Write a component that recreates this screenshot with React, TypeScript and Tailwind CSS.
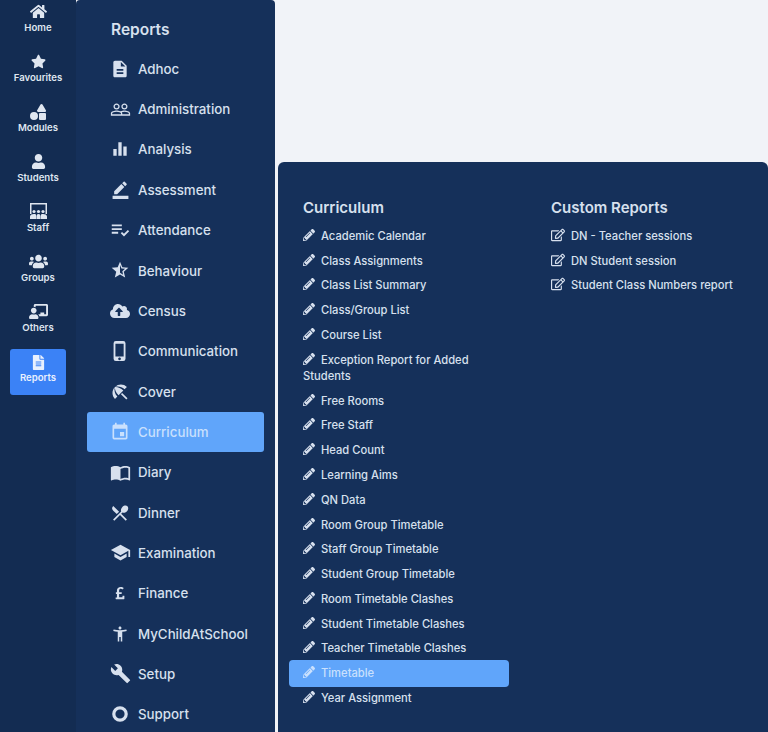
import React from "react";
import { FaHome, FaStar, FaShapes, FaUser, FaUsers, FaChalkboardTeacher, FaFileAlt, FaCloudUploadAlt, FaPoundSign, FaPencilAlt, FaRegEdit } from "react-icons/fa";
import { MdDescription, MdPeopleOutline, MdEqualizer, MdBorderColor, MdPlaylistAddCheck, MdStarHalf, MdPhoneIphone, MdEvent, MdImportContacts, MdLocalDining, MdSchool, MdAccessibilityNew, MdBuild, MdBeachAccess } from "react-icons/md";

function StaffIcon() {
  return (
    <svg width="19" height="17" viewBox="0 0 19 17" fill="currentColor">
      <path d="M1 0h17v11h-1.5V1.5h-14V11H1z" />
      <circle cx="5" cy="8.5" r="1.6" />
      <circle cx="9.5" cy="8.5" r="1.6" />
      <circle cx="14" cy="8.5" r="1.6" />
      <path d="M1 16v-2.5C1 11.8 3 11 5 11s2.2.6 2.2 2.5V16zM7.6 16v-2.5c0-1.7.6-2.5 1.9-2.5s1.9.8 1.9 2.5V16zM11.8 16v-2.5c0-1.9.2-2.5 2.2-2.5s4 .8 4 2.5V16z" />
    </svg>
  );
}

function RingIcon() {
  return (
    <svg width="16" height="16" viewBox="0 0 16 16" fill="none" stroke="currentColor" strokeWidth="3.2">
      <circle cx="8" cy="8" r="6.2" />
    </svg>
  );
}

const rail = [
  { label: "Home", icon: <FaHome size={17} /> },
  { label: "Favourites", icon: <FaStar size={15} /> },
  { label: "Modules", icon: <FaShapes size={16} /> },
  { label: "Students", icon: <FaUser size={15} /> },
  { label: "Staff", icon: <StaffIcon /> },
  { label: "Groups", icon: <FaUsers size={19} /> },
  { label: "Others", icon: <FaChalkboardTeacher size={19} /> },
];

const menu: { label: string; icon: React.ReactNode; active?: boolean }[] = [
  { label: "Adhoc", icon: <MdDescription size={20} /> },
  { label: "Administration", icon: <MdPeopleOutline size={21} /> },
  { label: "Analysis", icon: <MdEqualizer size={20} /> },
  { label: "Assessment", icon: <MdBorderColor size={19} /> },
  { label: "Attendance", icon: <MdPlaylistAddCheck size={22} /> },
  { label: "Behaviour", icon: <MdStarHalf size={20} /> },
  { label: "Census", icon: <FaCloudUploadAlt size={20} /> },
  { label: "Communication", icon: <MdPhoneIphone size={22} /> },
  { label: "Cover", icon: <MdBeachAccess size={20} /> },
  { label: "Curriculum", icon: <MdEvent size={20} />, active: true },
  { label: "Diary", icon: <MdImportContacts size={21} /> },
  { label: "Dinner", icon: <MdLocalDining size={20} /> },
  { label: "Examination", icon: <MdSchool size={21} /> },
  { label: "Finance", icon: <FaPoundSign size={14} /> },
  { label: "MyChildAtSchool", icon: <MdAccessibilityNew size={18} /> },
  { label: "Setup", icon: <MdBuild size={21} /> },
  { label: "Support", icon: <RingIcon /> },
];

const curriculum = ["Academic Calendar", "Class Assignments", "Class List Summary", "Class/Group List", "Course List", "Exception Report for Added Students", "Free Rooms", "Free Staff", "Head Count", "Learning Aims", "QN Data", "Room Group Timetable", "Staff Group Timetable", "Student Group Timetable", "Room Timetable Clashes", "Student Timetable Clashes", "Teacher Timetable Clashes", "Timetable", "Year Assignment"];
const custom = ["DN - Teacher sessions", "DN Student session", "Student Class Numbers report"];

export default function App() {
  return (
    <div className="flex h-[732px] w-[768px] overflow-hidden bg-[#f1f3f8] font-['Inter','Liberation_Sans',sans-serif]">
      <nav className="flex w-[76px] shrink-0 flex-col items-center bg-[#132c52] pt-[3px] text-[#dfe6f0]">
        {rail.map((r) => (
          <div key={r.label} className="flex h-[50px] w-full flex-col items-center">
            <div className="flex h-[17px] items-center justify-center">{r.icon}</div>
            <span className="mt-[1px] text-[9.6px] font-semibold leading-[14px]">{r.label}</span>
          </div>
        ))}
        <div className="mt-[-4px] flex h-[46px] w-[56px] flex-col items-center rounded-[3px] bg-[#3b82f6] pt-[6px] text-[#e8f0fe]">
          <FaFileAlt size={15} />
          <span className="mt-[1px] text-[9.6px] font-semibold leading-[14px]">Reports</span>
        </div>
      </nav>

      <aside className="w-[199px] shrink-0 rounded-t-[4px] bg-[#15305a] px-[11px] text-[#d7e0ee]">
        <div className="h-[48.6px] pl-[24px] pt-[20px] text-[15.5px] font-semibold leading-[20px]">Reports</div>
        {menu.map((m) => (
          <div key={m.label} className={`flex h-[40.35px] items-center rounded-[3px] ${m.active ? "bg-[#60a5fa] text-[#c9e0fd]" : ""}`}>
            <div className="flex w-[51px] shrink-0 justify-center pl-[15px]">{m.icon}</div>
            <span className="pt-[2px] text-[13.3px] font-medium">{m.label}</span>
          </div>
        ))}
      </aside>

      <div className="ml-[3px] flex min-w-0 flex-1 flex-col">
        <div className="h-[162px] shrink-0" />
        <section className="flex flex-1 rounded-t-[6px] bg-[#15305a] pl-[11px] pt-[35px] text-[#d7e0ee]">
          <div className="w-[220px] shrink-0">
            <h2 className="pl-[14px] text-[15px] font-semibold leading-[22px]">Curriculum</h2>
            <ul className="mt-[4.5px]">
              {curriculum.map((c) => (
                <li key={c} className={`rounded-[4px] px-[14px] text-[11.2px] font-medium leading-[16.1px] ${c === "Timetable" ? "my-[-1px] bg-[#60a5fa] py-[5.35px] text-[#c9e0fd]" : "py-[4.35px]"}`}>
                  <FaPencilAlt size={12} className="mr-[6px] inline-block align-[-1px]" />
                  {c}
                </li>
              ))}
            </ul>
          </div>
          <div className="ml-[42px] flex-1">
            <h2 className="text-[15px] font-semibold leading-[22px]">Custom Reports</h2>
            <ul className="mt-[4.5px]">
              {custom.map((c) => (
                <li key={c} className="py-[4.35px] text-[11.2px] font-medium leading-[16.1px]">
                  <FaRegEdit size={14} className="mr-[6px] inline-block align-[-2px]" />
                  {c}
                </li>
              ))}
            </ul>
          </div>
        </section>
      </div>
    </div>
  );
}
